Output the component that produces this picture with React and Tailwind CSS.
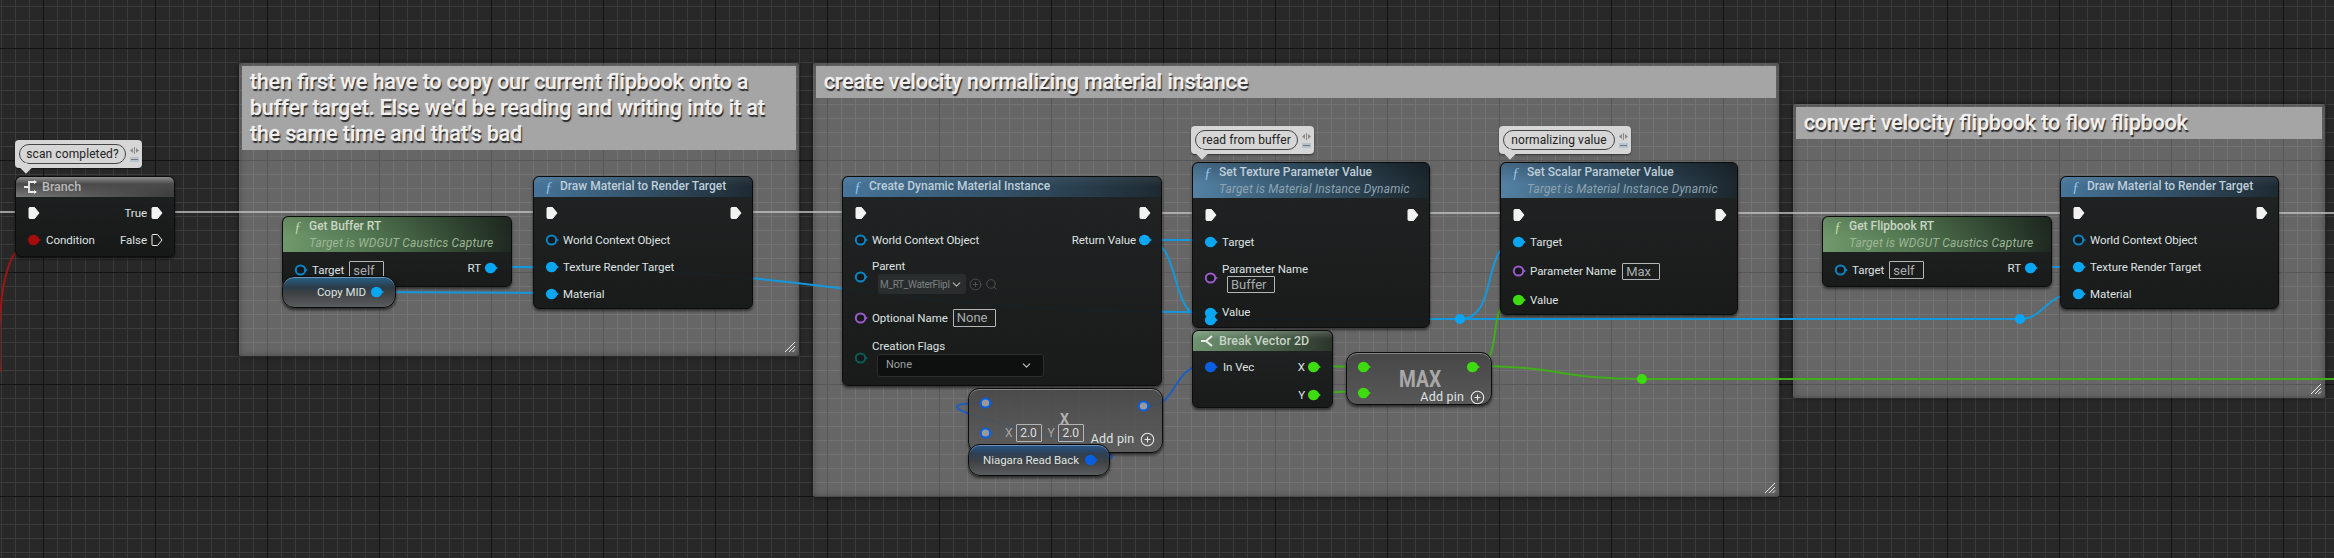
import React from "react";
import { ChevronDown, CirclePlus, Search } from "lucide-react";

const BLUE = "#0aa6f2";
const RING = "#0b84c4";
const DBLUE = "#0a5fe0";
const GREEN = "#3ddb10";

function Pin({ color = BLUE, hollow = false, fill = "#14181a", className = "" }) {
  return (
    <svg width="16" height="14" viewBox="0 0 16 14" className={"shrink-0 " + className}>
      <polygon points="11,4.5 15,7 11,9.5" fill={color} />
      {hollow ? (
        <ellipse cx="7.5" cy="7" rx="4.7" ry="4.5" fill={fill} stroke={color} strokeWidth="2" />
      ) : (
        <ellipse cx="7.5" cy="7" rx="5.6" ry="5.3" fill={color} />
      )}
    </svg>
  );
}

function Exec({ hollow = false }) {
  return (
    <svg width="16" height="14" viewBox="0 0 16 14" className="shrink-0">
      <path
        d="M4 1.5 H8.5 L13 7 L8.5 12.5 H4 Q3 12.5 3 11.5 V2.5 Q3 1.5 4 1.5 Z"
        fill={hollow ? "none" : "#f2f2f2"}
        stroke="#f2f2f2"
        strokeWidth="1"
      />
    </svg>
  );
}

function Label({ children, className = "" }) {
  return <span className={"text-[11.5px] leading-[14px] tracking-[-0.05px] text-[#dfe2e2] whitespace-nowrap " + className}>{children}</span>;
}

function Box({ children, className = "" }) {
  return (
    <span className={"flex items-center border border-[#b4b6b6] rounded-[1px] pl-[3px] text-[#a9acac] text-[13px] leading-none " + className}>
      {children}
    </span>
  );
}

function Comment({ className, children }) {
  return (
    <div className={"absolute bg-[#ffffff4a] rounded-[2px] shadow-[inset_0_0_6px_rgba(0,0,0,0.35),0_0_5px_rgba(0,0,0,0.6)] px-[3px] pt-[3px] " + className}>
      <div className="bg-[#a5a5a5] px-[8px] py-[3px] text-[21.2px] leading-[26px] font-medium text-[#f0f0f0] [text-shadow:1px_2px_1px_#2a2a2a,0_0_1px_#f0f0f0]">
        {children}
      </div>
      <svg width="12" height="12" viewBox="0 0 12 12" className="absolute right-[3px] bottom-[3px]">
        <path d="M1 11 L11 1 M5 11 L11 5 M8.5 11 L11 8.5" stroke="#e8e8e8" strokeWidth="1" />
      </svg>
    </div>
  );
}

const HEAD = {
  blue: "bg-[linear-gradient(180deg,rgba(255,255,255,0.06),transparent_45%),linear-gradient(97deg,#47759a_0%,#3b607d_30%,#1e2a32_100%)]",
  blue2: "bg-[linear-gradient(180deg,rgba(0,0,0,0.22),transparent_60%),linear-gradient(100deg,#5683a6_0%,#3c607a_35%,#1c262c_100%)]",
  green: "bg-[linear-gradient(180deg,rgba(0,0,0,0.12),transparent_60%),linear-gradient(98deg,#729a6d_0%,#517650_40%,#1e2820_100%)]",
  gray: "bg-[linear-gradient(180deg,#8d8d8d_0%,#4a4a4a_35%,transparent_100%),linear-gradient(90deg,#7a7a7a,#3b3b3b)]",
  vgreen: "bg-[linear-gradient(180deg,rgba(255,255,255,0.18),transparent_40%),linear-gradient(95deg,#6f9370_0%,#4f6a50_50%,#2c342c_100%)]",
};

function Node({ className, tone = "blue", head, headH = "h-[20px]", children }) {
  return (
    <div className={"absolute rounded-[6px] border border-[#0b0c0c] bg-[linear-gradient(180deg,#1e2121f5,#161818f5)] shadow-[0_2px_3px_rgba(0,0,0,0.55)] overflow-hidden " + className}>
      <div className={"rounded-t-[5px] " + headH + " " + HEAD[tone]}>{head}</div>
      {children}
    </div>
  );
}

function Head({ title, sub, green = false }) {
  return (
    <div className="flex pl-[11px]">
      <span className={"w-[15px] font-['Liberation_Serif'] italic text-[15px] leading-[20px] " + (green ? "text-[#b9d9a8]" : "text-[#8cc4ec]")}>ƒ</span>
      <div>
        <div className={"text-[12px] leading-[19px] font-medium whitespace-nowrap " + (green ? "text-[#c9d6c5]" : "text-[#bfced9]")}>{title}</div>
        {sub && <div className={"text-[12px] leading-[14px] italic whitespace-nowrap tracking-[0.15px] " + (green ? "text-[#9db694]" : "text-[#8ea3b0]")}>{sub}</div>}
      </div>
    </div>
  );
}

function Row({ h, children, className = "" }) {
  return <div className={"flex items-center justify-between pl-[10px] pr-[8px] " + h + " " + className}>{children}</div>;
}

function Bubble({ className, text, pillClass = "" }) {
  return (
    <div className={"absolute h-[28px] rounded-[4px] bg-[#d6d6d6] shadow-[0_1px_2px_rgba(0,0,0,0.5)] flex items-center pl-[4px] pr-[3px] gap-[4px] " + className}>
      <div className={"h-[20px] rounded-full border border-[#444] flex items-center justify-center text-[12px] tracking-[0.1px] text-[#222] whitespace-nowrap " + pillClass}>{text}</div>
      <div className="flex flex-col items-center gap-[3px] w-[9px]">
        <svg width="9" height="7" viewBox="0 0 9 7"><path d="M0 3.5 L3 1 V6 Z M9 3.5 L6 1 V6 Z M4 0 H5 V7 H4 Z" fill="#8a8a8a" /></svg>
        <svg width="9" height="5" viewBox="0 0 9 5"><rect width="9" height="5" fill="#b3c3d0" /><path d="M1 2.5 H8" stroke="#777" strokeWidth="1" /></svg>
      </div>
      <span className="absolute left-[7px] -bottom-[4px] w-[8px] h-[8px] rotate-45 bg-[#d6d6d6]" />
    </div>
  );
}

function AddPin() {
  return (
    <div className="flex items-center gap-[6px]">
      <Label className="!text-[12.5px] tracking-[0.2px]">Add pin</Label>
      <CirclePlus size={15} color="#e6e6e6" strokeWidth={1.8} />
    </div>
  );
}

const Draw = ({ className }) => (
  <Node className={className} head={<Head title="Draw Material to Render Target" />}>
    <div className="pt-[2px]">
      <Row h="h-[27px]"><Exec /><Exec /></Row>
      <Row h="h-[27px]" className="!justify-start gap-[3px]"><Pin hollow color={RING} /><Label>World Context Object</Label></Row>
      <Row h="h-[27px]" className="!justify-start gap-[3px]"><Pin /><Label>Texture Render Target</Label></Row>
      <Row h="h-[27px]" className="!justify-start gap-[3px]"><Pin /><Label>Material</Label></Row>
    </div>
  </Node>
);

const GetRT = ({ className, title, pr }) => (
  <Node className={className} tone="green" headH="h-[35px]" head={<Head green title={title} sub="Target is WDGUT Caustics Capture" />}>
    <div className={"flex items-center justify-between h-[36px] pl-[10px] " + pr}>
      <div className="flex items-center gap-[3px]">
        <Pin hollow color={RING} />
        <Label>Target</Label>
        <Box className="ml-[2px] w-[35px] h-[18px]">self</Box>
      </div>
      <div className="flex items-center gap-[2px] -mt-[4px]">
        <Label>RT</Label>
        <Pin />
      </div>
    </div>
  </Node>
);

const compact = "absolute border border-[#0c0c0c] shadow-[inset_0_1px_0_rgba(255,255,255,0.35),0_2px_3px_rgba(0,0,0,0.6)] ";

export default function App() {
  return (
    <div className="relative w-[2334px] h-[558px] overflow-hidden font-['Roboto',sans-serif] bg-[#282828] bg-[linear-gradient(#131313_1px,transparent_1px),linear-gradient(90deg,#131313_1px,transparent_1px),linear-gradient(#3b3b3b_1px,transparent_1px),linear-gradient(90deg,#3b3b3b_1px,transparent_1px)] bg-[size:112px_112px,112px_112px,14px_14px,14px_14px] bg-[position:43px_48px,43px_48px,1px_6px,1px_6px]">
      <Comment className="left-[239px] top-[63px] w-[560px] h-[293px]">
        then first we have to copy our current flipbook onto a buffer target. Else we'd be reading and writing into it at the same time and that's bad
      </Comment>
      <Comment className="left-[813px] top-[63px] w-[966px] h-[434px]">create velocity normalizing material instance</Comment>
      <Comment className="left-[1793px] top-[104px] w-[532px] h-[294px]">convert velocity flipbook to flow flipbook</Comment>

      <svg width="2334" height="558" className="absolute inset-0" fill="none">
        <g stroke="#c2c2c2" strokeWidth="1.6">
          <path d="M0 212 H15 M175 212 H533 M753 212 H842 M1162 213 H1192 M1430 213 H1500 M1738 213 H2060 M2279 213 H2334" />
        </g>
        <g stroke="#a11414" strokeWidth="2">
          <path d="M32 240 C4 246 -3 300 0 372" />
        </g>
        <g stroke="#1398de" strokeWidth="2">
          <path d="M492 267 H551" />
          <path d="M375 292 L551 293" />
          <path d="M492 267 C850 267 850 312 1209 312" />
          <path d="M1145 240 H1210" />
          <path d="M1145 240 C1185 240 1165 319 1209 319 H2020 C2045 319 2045 293 2078 293" />
          <path d="M1460 319 C1500 319 1480 241 1518 241" />
          <path d="M2032 267 H2078" />
        </g>
        <g stroke="#1c5fc0" strokeWidth="2">
          <path d="M1145 407 C1180 407 1170 365 1207 365" />
          <path d="M1090 460 C1200 460 860 403 985 403" />
        </g>
        <g stroke="#3fae1a" strokeWidth="2">
          <path d="M1313 366 L1362 367" />
          <path d="M1313 393 L1362 391" />
          <path d="M1472 366 C1510 366 1480 299 1518 299" />
          <path d="M1472 366 C1560 366 1560 379 1642 379 H2334" />
        </g>
        <circle cx="1460" cy="319" r="5" fill={BLUE} />
        <circle cx="2020" cy="319" r="5" fill={BLUE} />
        <circle cx="1642" cy="379" r="5" fill={GREEN} />
      </svg>

      <Bubble className="left-[15px] top-[140px] w-[127px]" text="scan completed?" pillClass="w-[107px]" />
      <Node
        className="left-[15px] top-[176px] w-[160px] h-[81px]"
        tone="gray"
        head={
          <div className="flex items-center pl-[8px] gap-[3px] h-[20px]">
            <svg width="14" height="14" viewBox="0 0 14 14" fill="none" stroke="#eaeaea" strokeWidth="1.8">
              <path d="M0 7 H5 M12 2 H5 V12 H12" />
              <path d="M10 0 L13 2 L10 4 Z M10 10 L13 12 L10 14 Z" fill="#eaeaea" stroke="none" />
            </svg>
            <span className="text-[12.5px] font-medium text-[#b9b9b9] ml-[1px]">Branch</span>
          </div>
        }
      >
        <div className="pt-[2px]">
          <Row h="h-[27px]" className="!pr-[9px]">
            <Exec />
            <div className="flex items-center gap-[2px]"><Label>True</Label><Exec /></div>
          </Row>
          <Row h="h-[28px]" className="!pr-[9px]">
            <div className="flex items-center gap-[4px]"><Pin color="#a50c0c" /><Label>Condition</Label></div>
            <div className="flex items-center gap-[2px]"><Label>False</Label><Exec hollow /></div>
          </Row>
        </div>
      </Node>

      <GetRT className="left-[282px] top-[216px] w-[230px] h-[71px]" title="Get Buffer RT" pr="pr-[12px]" />
      <div className={compact + "left-[282px] top-[276px] w-[114px] h-[32px] rounded-[12px] bg-[linear-gradient(180deg,#25628a_0%,#2b3c48_35%,#3f4244_55%,#5a5c5d_100%)] flex items-center justify-end gap-[3px] pr-[10px]"}>
        <Label>Copy MID</Label>
        <Pin />
      </div>
      <Draw className="left-[533px] top-[176px] w-[220px] h-[133px]" />

      <Node className="left-[842px] top-[176px] w-[320px] h-[210px]" head={<Head title="Create Dynamic Material Instance" />}>
        <div className="pt-[2px]">
          <Row h="h-[27px]"><Exec /><Exec /></Row>
          <Row h="h-[27px]">
            <div className="flex items-center gap-[3px]"><Pin hollow color={RING} /><Label>World Context Object</Label></div>
            <div className="flex items-center gap-[1px]"><Label>Return Value</Label><Pin /></div>
          </Row>
          <div className="flex h-[47px] pl-[10px] gap-[3px]">
            <Pin hollow color={RING} className="mt-[17px]" />
            <div className="pt-[6px]">
              <Label className="block">Parent</Label>
              <div className="flex items-center mt-[1px] ml-[6px] gap-[3px]">
                <div className="w-[88px] h-[20px] bg-[#2a2d2d] rounded-[3px] flex items-center justify-between pl-[2px] pr-[3px]">
                  <span className="text-[10px] tracking-[-0.3px] text-[#7c8080] whitespace-nowrap">M_RT_WaterFlipl</span>
                  <ChevronDown size={13} color="#b5b5b5" />
                </div>
                <CirclePlus size={13} color="#4d5151" strokeWidth={1.8} />
                <Search size={13} color="#4d5151" strokeWidth={1.8} />
              </div>
            </div>
          </div>
          <Row h="h-[35px]" className="!justify-start gap-[3px]">
            <Pin color="#9b59c9" hollow />
            <Label>Optional Name</Label>
            <Box className="ml-[2px] w-[43px] h-[18px]">None</Box>
          </Row>
          <div className="flex h-[51px] pl-[10px] gap-[3px]">
            <Pin color="#0c5c55" hollow className="mt-[16px]" />
            <div className="pt-[4px]">
              <Label className="block">Creation Flags</Label>
              <div className="mt-[1px] ml-[5px] w-[167px] h-[23px] bg-[#0e0f0f] border border-[#2b2e2e] rounded-[3px] flex items-center justify-between pl-[8px] pr-[10px]">
                <span className="text-[11px] text-[#9aa0a0]">None</span>
                <ChevronDown size={13} color="#c4c4c4" />
              </div>
            </div>
          </div>
        </div>
      </Node>

      <div className={compact + "left-[968px] top-[388px] w-[195px] h-[65px] rounded-[11px] bg-[linear-gradient(180deg,#474747e0,#5b5b5be0)]"}>
        <div className="flex items-center justify-between h-[28px] pl-[9px] pr-[10px]">
          <Pin color={DBLUE} hollow fill="#9a9a9a" />
          <Pin color={DBLUE} hollow fill="#9a9a9a" className="mt-[6px]" />
        </div>
        <span className="absolute left-[91px] top-[24px] text-[14px] leading-[12px] font-bold text-[#b0b0b0]">X</span>
        <div className="flex items-center h-[28px] mt-[2px] pl-[9px]">
          <Pin color={DBLUE} hollow fill="#9a9a9a" />
          <span className="ml-[11px] text-[12px] text-[#a5a5a5]">X</span>
          <Box className="ml-[3px] w-[26px] h-[18px] !pl-[0px] justify-center !text-[#dfdfdf] !text-[12px]">2.0</Box>
          <span className="ml-[6px] text-[12px] text-[#a5a5a5]">Y</span>
          <Box className="ml-[3px] w-[26px] h-[18px] !pl-[0px] justify-center !text-[#dfdfdf] !text-[12px]">2.0</Box>
          <div className="ml-[7px] mt-[12px]"><AddPin /></div>
        </div>
      </div>
      <div className={compact + "left-[968px] top-[444px] w-[142px] h-[32px] rounded-[12px] bg-[linear-gradient(180deg,#24558c_0%,#2f3f52_30%,#3f4244_55%,#5a5c5d_100%)] flex items-center justify-end gap-[4px] pr-[10px]"}>
        <Label>Niagara Read Back</Label>
        <Pin color={DBLUE} />
      </div>

      <Bubble className="left-[1191px] top-[126px] w-[123px]" text="read from buffer" pillClass="w-[103px]" />
      <Node className="left-[1192px] top-[162px] w-[238px] h-[166px]" tone="blue2" headH="h-[35px]" head={<Head title="Set Texture Parameter Value" sub="Target is Material Instance Dynamic" />}>
        <div className="pt-[3px]">
          <Row h="h-[27px]"><Exec /><Exec /></Row>
          <Row h="h-[27px]" className="!justify-start gap-[3px]"><Pin /><Label>Target</Label></Row>
          <div className="flex h-[41px] pl-[10px] gap-[3px]">
            <Pin color="#9b59c9" hollow className="mt-[16px]" />
            <div className="pt-[7px]">
              <Label className="block">Parameter Name</Label>
              <Box className="mt-[0px] ml-[5px] w-[48px] h-[17px]">Buffer</Box>
            </div>
          </div>
          <div className="flex h-[33px] pl-[10px] gap-[3px]">
            <div className="flex flex-col mt-[10px]">
              <Pin />
              <Pin className="-mt-[7px]" />
            </div>
            <Label className="mt-[9px]">Value</Label>
          </div>
        </div>
      </Node>

      <Node
        className="left-[1192px] top-[330px] w-[141px] h-[78px]"
        tone="vgreen"
        head={
          <div className="flex items-center pl-[8px] gap-[4px] h-[20px]">
            <svg width="14" height="14" viewBox="0 0 14 14" fill="none" stroke="#eaeaea" strokeWidth="2">
              <path d="M0 7 H5 L11 2 M5 7 L11 12" />
            </svg>
            <span className="text-[12.5px] font-medium text-[#c8d4c8]">Break Vector 2D</span>
          </div>
        }
      >
        <Row h="h-[30px]" className="mt-[1px] !pr-[10px]">
          <div className="flex items-center gap-[4px]"><Pin color={DBLUE} /><Label>In Vec</Label></div>
          <div className="flex items-center gap-[1px]"><Label>X</Label><Pin color={GREEN} /></div>
        </Row>
        <div className="flex items-center justify-end gap-[1px] h-[26px] pr-[10px]"><Label>Y</Label><Pin color={GREEN} /></div>
      </Node>

      <div className={compact + "left-[1346px] top-[352px] w-[146px] h-[53px] rounded-[11px] bg-[linear-gradient(180deg,#474747,#585858)]"}>
        <div className="flex items-center justify-between h-[28px] pl-[9px] pr-[10px]">
          <Pin color={GREEN} />
          <Pin color={GREEN} />
        </div>
        <span className="absolute left-[52px] top-[13px] text-[24px] leading-[26px] font-bold text-[#a8a8a8] origin-left scale-x-[0.8]">MAX</span>
        <div className="flex items-center justify-between h-[24px] pl-[9px] pr-[6px]">
          <Pin color={GREEN} />
          <div className="mt-[8px]"><AddPin /></div>
        </div>
      </div>

      <Bubble className="left-[1499px] top-[126px] w-[132px]" text="normalizing value" pillClass="w-[112px]" />
      <Node className="left-[1500px] top-[162px] w-[238px] h-[153px]" tone="blue2" headH="h-[35px]" head={<Head title="Set Scalar Parameter Value" sub="Target is Material Instance Dynamic" />}>
        <div className="pt-[3px]">
          <Row h="h-[27px]"><Exec /><Exec /></Row>
          <Row h="h-[27px]" className="!justify-start gap-[3px]"><Pin /><Label>Target</Label></Row>
          <Row h="h-[32px]" className="!justify-start gap-[3px]">
            <Pin color="#9b59c9" hollow />
            <Label>Parameter Name</Label>
            <Box className="ml-[3px] w-[38px] h-[17px]">Max</Box>
          </Row>
          <Row h="h-[26px]" className="!justify-start gap-[3px]"><Pin color={GREEN} /><Label>Value</Label></Row>
        </div>
      </Node>

      <GetRT className="left-[1822px] top-[216px] w-[230px] h-[71px]" title="Get Flipbook RT" pr="pr-[12px]" />
      <Draw className="left-[2060px] top-[176px] w-[219px] h-[133px]" />
    </div>
  );
}
